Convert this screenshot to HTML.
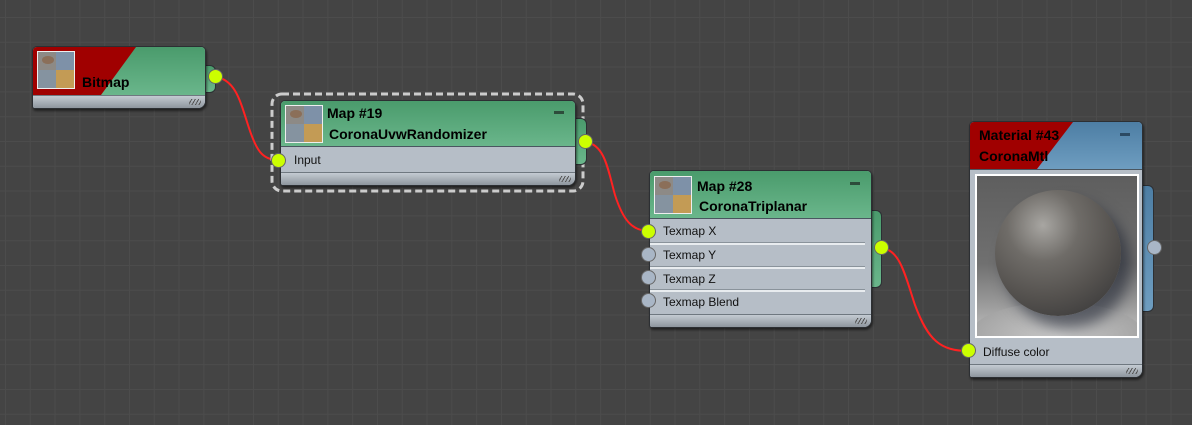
<!DOCTYPE html>
<html><head><meta charset="utf-8"><style>
*{margin:0;padding:0;box-sizing:border-box}
body{width:1192px;height:425px;overflow:hidden;position:relative;background-color:#444;
background-image:linear-gradient(to right,#4c4c4c 1px,transparent 1px),linear-gradient(to bottom,#4c4c4c 1px,transparent 1px);
background-size:24.8px 24.8px;background-position:5px 17px;font-family:"Liberation Sans",sans-serif}
.node{position:absolute;background:#b6bec7;border:1px solid #2c2f33;border-radius:5px 5px 8px 3px;box-shadow:1px 2px 2px rgba(0,0,0,.5);overflow:hidden}
.hdr{position:absolute;left:0;right:0;top:0;border-bottom:1px solid #4a5660}
.green{background:linear-gradient(#4a9b6c,#6ab68b)}
.blue{background:linear-gradient(#4d7ea4,#6e9dc0)}
.foot{position:absolute;left:0;right:0;bottom:0;height:13px;background:linear-gradient(#c4cbd2,#8e969e);border-top:1px solid #6f7880}
.foot:after{content:"";position:absolute;right:4px;bottom:3px;width:12px;height:6px;background:repeating-linear-gradient(120deg,transparent 0 2px,#555 2px 3px)}
.t{position:absolute;font-weight:bold;font-size:14px;color:#000;white-space:nowrap}
.row{position:absolute;left:0;right:0;font-size:12px;color:#111;padding-left:13px;border-bottom:2px solid #e8ecef;box-shadow:0 -1px 0 #8a939b inset}
.thumb{position:absolute;width:38px;height:38px;border:1px solid #eee;background:
conic-gradient(from 90deg at 50% 50%,#c39b55 0 25%,#8593a0 25% 50%,#8d8a86 50% 75%,#7e91a8 75% 100%)}
.thumb:before{content:"";position:absolute;left:4px;top:4px;width:12px;height:8px;background:#8a6446;border-radius:50%;opacity:.7}
.dot{position:absolute;width:15px;height:15px;border-radius:50%;background:#cf0;border:1px solid #666}
.gdot{position:absolute;width:15px;height:15px;border-radius:50%;background:#a9b6c6;border:1px solid #666}
.tab{position:absolute;border:1px solid #2c2f33;border-left:none;border-radius:0 6px 6px 0}
.min{position:absolute;width:10px;height:3px;background:#2d4c3b}
</style></head><body>
<svg width="1192" height="425" style="position:absolute;left:0;top:0">
<g fill="none" stroke="#f22" stroke-width="2">
<path d="M216 77 C235 80 240 100 248 125 C256 150 262 160 278 160"/>
<path d="M586 142 C605 145 608 170 615 195 C623 220 632 231 649 231"/>
<path d="M882 248 C900 250 905 275 915 305 C928 340 940 351 969 351"/>
</g>
<rect x="272" y="94" width="311" height="97" rx="10" fill="none" stroke="#ccc" stroke-width="3" stroke-dasharray="7 4"/>
</svg>

<div class="tab green" style="left:204px;top:65px;width:12px;height:28px"></div>
<div class="node" style="left:32px;top:46px;width:174px;height:63px">
 <div class="hdr green" style="height:49px"><div style="position:absolute;inset:0;background:#a00000;clip-path:polygon(0 0,103px 0,68px 100%,0 100%)"></div></div>
 <div class="thumb" style="left:4px;top:4px"></div>
 <div class="t" style="left:49px;top:27px">Bitmap</div>
 <div class="foot"></div>
</div>
<div class="dot" style="left:208px;top:69px"></div>

<div class="tab green" style="left:574px;top:118px;width:13px;height:47px"></div>
<div class="node" style="left:280px;top:100px;width:296px;height:86px">
 <div class="hdr green" style="height:46px"></div>
 <div class="thumb" style="left:4px;top:4px"></div>
 <div class="t" style="left:46px;top:4px">Map #19</div>
 <div class="t" style="left:48px;top:25px">CoronaUvwRandomizer</div>
 <div class="min" style="left:273px;top:10px"></div>
 <div class="row" style="top:46px;height:26px;line-height:26px;border:none;box-shadow:none">Input</div>
 <div class="foot"></div>
</div>
<div class="dot" style="left:271px;top:153px"></div>
<div class="dot" style="left:578px;top:134px"></div>

<div class="tab green" style="left:870px;top:210px;width:12px;height:78px"></div>
<div class="node" style="left:649px;top:170px;width:223px;height:158px">
 <div class="hdr green" style="height:48px"></div>
 <div class="thumb" style="left:4px;top:5px"></div>
 <div class="t" style="left:47px;top:7px">Map #28</div>
 <div class="t" style="left:49px;top:27px">CoronaTriplanar</div>
 <div class="min" style="left:200px;top:11px"></div>
 <div class="row" style="top:49px;height:25px;line-height:22px;margin-right:6px">Texmap X</div>
 <div class="row" style="top:74px;height:24px;line-height:21px;margin-right:6px">Texmap Y</div>
 <div class="row" style="top:98px;height:23px;line-height:20px;margin-right:6px">Texmap Z</div>
 <div class="row" style="top:121px;height:23px;line-height:20px;border:none;box-shadow:none">Texmap Blend</div>
 <div class="foot"></div>
</div>
<div class="dot" style="left:641px;top:224px"></div>
<div class="gdot" style="left:641px;top:247px"></div>
<div class="gdot" style="left:641px;top:270px"></div>
<div class="gdot" style="left:641px;top:293px"></div>
<div class="dot" style="left:874px;top:240px"></div>

<div class="tab blue" style="left:1141px;top:185px;width:13px;height:127px"></div>
<div class="node" style="left:969px;top:121px;width:174px;height:257px">
 <div class="hdr" style="height:48px;background:linear-gradient(#4d7ea4,#6e9dc0)"><div style="position:absolute;inset:0;background:#a00000;clip-path:polygon(0 0,103px 0,67px 100%,0 100%)"></div></div>
 <div class="t" style="left:9px;top:5px">Material #43</div>
 <div class="t" style="left:9px;top:26px">CoronaMtl</div>
 <div class="min" style="left:150px;top:11px;background:#2c4a63"></div>
 <div style="position:absolute;left:5px;top:52px;width:164px;height:164px;border:2px solid #fff;overflow:hidden;background:radial-gradient(ellipse 90% 35% at 50% 100%,#c8c8c8,#a5a5a5 60%,transparent 61%),linear-gradient(#5e5e5e,#707070 55%,#9a9a9a 80%,#c0c0c0)">
  <div style="position:absolute;left:18px;top:14px;width:126px;height:126px;border-radius:50%;background:radial-gradient(circle at 38% 28%,#a8a6a2 0,#6f6c68 30%,#55524f 60%,#3e3d3d 85%,#3a4458 100%);box-shadow:10px 12px 14px rgba(20,25,40,.55)"></div>
 </div>
 <div class="row" style="top:217px;height:27px;line-height:27px;border:none;box-shadow:none">Diffuse color</div>
 <div class="foot"></div>
</div>
<div class="dot" style="left:961px;top:343px"></div>
<div class="gdot" style="left:1147px;top:240px"></div>
</body></html>
